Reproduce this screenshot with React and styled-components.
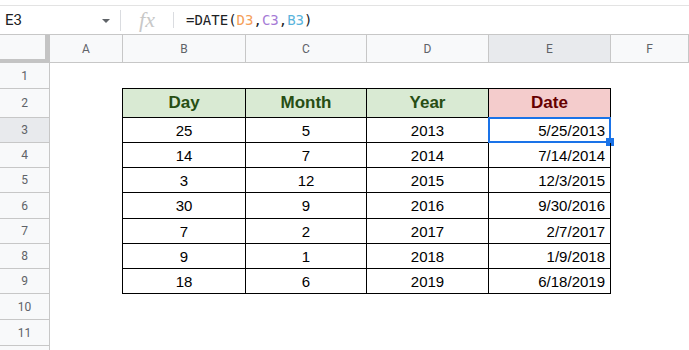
import React from "react";
import styled, { createGlobalStyle } from "styled-components";

const GlobalStyle = createGlobalStyle`
    body {
        margin: 0;
        background: #fff;
        font-family: "Liberation Sans", Arial, sans-serif;
    }
`;

// Data
const COLUMNS = ["A", "B", "C", "D", "E", "F"];
const HEADERS = ["Day", "Month", "Year", "Date"];
const ROWS = [
    [25, 5, 2013, "5/25/2013"],
    [14, 7, 2014, "7/14/2014"],
    [3, 12, 2015, "12/3/2015"],
    [30, 9, 2016, "9/30/2016"],
    [7, 2, 2017, "2/7/2017"],
    [9, 1, 2018, "1/9/2018"],
    [18, 6, 2019, "6/18/2019"],
];
// row 12 only peeks in at the bottom edge, its number is below the fold
const ROW_NUMBERS = [1, 2, 3, 4, 5, 6, 7, 8, 9, 10, 11, 12];

// Styled Components
const Page = styled.div`
    width: 689px;
    height: 350px;
    overflow: hidden;
    background: #fff;
`;

const TopStrip = styled.div`
    height: 5px;
    border-bottom: 1px solid #e3e3e3;
`;

const FormulaBar = styled.div`
    display: flex;
    align-items: center;
    height: 28px;
    border-bottom: 1px solid #c7c7c7;
`;

const NameBox = styled.div`
    width: 120px;
    box-sizing: border-box;
    padding: 0 10px 0 5px;
    display: flex;
    align-items: center;
    justify-content: space-between;
    font-family: Roboto, "Liberation Sans", sans-serif;
    font-size: 15px;
    color: #202124;
`;

const Caret = styled.span`
    width: 0;
    height: 0;
    border-left: 4px solid transparent;
    border-right: 4px solid transparent;
    border-top: 4px solid #5f6368;
    margin-top: 2px;
`;

const Divider = styled.div`
    width: 1px;
    height: ${(p) => p.$h}px;
    background: #dadce0;
`;

const FxBox = styled.div`
    width: 52px;
    text-align: center;
    font-family: "Liberation Serif", serif;
    font-style: italic;
    font-size: 22px;
    color: #c8c8c8;
    line-height: 1;
`;

const Formula = styled.div`
    margin-left: 12px;
    font-family: "DejaVu Sans Mono", monospace;
    font-size: 14px;
    color: #202124;
`;

const Ref = styled.span`
    color: ${(p) => p.$color};
`;

const Sheet = styled.div`
    display: grid;
    grid-template-columns: 50px 73px 123px 121px 122px 122px 1fr;
    grid-template-rows: 28px 26px 29px 25px 25px 25px 26px 25px 25px 25px 26px 26px 26px;
`;

const Corner = styled.div`
    grid-column: 1;
    grid-row: 1;
    background: #f8f9fa;
    border-right: 5px solid #c4c4c4;
    border-bottom: 4px solid #c4c4c4;
`;

const ColHeader = styled.div`
    grid-row: 1;
    background: ${(p) => (p.$active ? "#e8eaed" : "#f8f9fa")};
    border-right: 1px solid #c7c7c7;
    border-bottom: 1px solid #c7c7c7;
    display: flex;
    align-items: center;
    justify-content: center;
    font-family: Roboto, "Liberation Sans", sans-serif;
    font-size: 12px;
    color: #5f6368;
`;

const RowHeader = styled.div`
    grid-column: 1;
    background: ${(p) => (p.$active ? "#e8eaed" : "#f8f9fa")};
    border-right: 1px solid #c7c7c7;
    border-bottom: 1px solid #c7c7c7;
    display: flex;
    align-items: center;
    justify-content: center;
    font-family: Roboto, "Liberation Sans", sans-serif;
    font-size: 12px;
    color: #5f6368;
`;

const Table = styled.div`
    grid-column: 3 / 7;
    grid-row: 3 / 11;
    margin: -1px 0 0 -1px;
    border-top: 1px solid #000;
    border-left: 1px solid #000;
    display: grid;
    grid-template-columns: 123px 121px 122px 122px;
    grid-template-rows: 29px 25px 25px 25px 26px 25px 25px 25px;
`;

const Cell = styled.div`
    position: relative;
    border-right: 1px solid #000;
    border-bottom: 1px solid #000;
    display: flex;
    align-items: center;
    justify-content: ${(p) => (p.$right ? "flex-end" : "center")};
    padding: 0 5px;
    font-size: 15px;
    color: #000;
`;

const HeadCell = styled(Cell)`
    background: ${(p) => (p.$red ? "#f4cccc" : "#d9ead3")};
    color: ${(p) => (p.$red ? "#660000" : "#274e13")};
    font-weight: bold;
    font-size: 17px;
`;

const Selection = styled.span`
    position: absolute;
    left: -1px;
    top: -1px;
    right: -1px;
    bottom: -1px;
    border: 2px solid #1a73e8;
    pointer-events: none;
`;

const Handle = styled.span`
    position: absolute;
    right: -5px;
    bottom: -5px;
    width: 8px;
    height: 8px;
    background: #1a73e8;
`;

const App = () => {
    return (
        <Page>
            <GlobalStyle />
            <TopStrip />
            <FormulaBar>
                <NameBox>
                    E3
                    <Caret />
                </NameBox>
                <Divider $h={21} />
                <FxBox>fx</FxBox>
                <Divider $h={16} />
                <Formula>
                    =DATE(<Ref $color="#f5a05a">D3</Ref>,<Ref $color="#a67bd6">C3</Ref>,
                    <Ref $color="#5ab4dc">B3</Ref>)
                </Formula>
            </FormulaBar>

            <Sheet>
                <Corner />
                {COLUMNS.map((c) => (
                    <ColHeader key={c} $active={c === "E"}>
                        {c}
                    </ColHeader>
                ))}
                {ROW_NUMBERS.map((n) => (
                    <RowHeader key={n} style={{ gridRow: n + 1 }} $active={n === 3}>
                        {n < 12 ? n : null}
                    </RowHeader>
                ))}

                <Table>
                    {HEADERS.map((h) => (
                        <HeadCell key={h} $red={h === "Date"}>
                            {h}
                        </HeadCell>
                    ))}
                    {ROWS.map((row, i) =>
                        row.map((v, j) => (
                            <Cell key={`${i}-${j}`} $right={j === 3}>
                                {v}
                                {i === 0 && j === 3 && (
                                    <Selection>
                                        <Handle />
                                    </Selection>
                                )}
                            </Cell>
                        ))
                    )}
                </Table>
            </Sheet>
        </Page>
    );
};

export default App;
